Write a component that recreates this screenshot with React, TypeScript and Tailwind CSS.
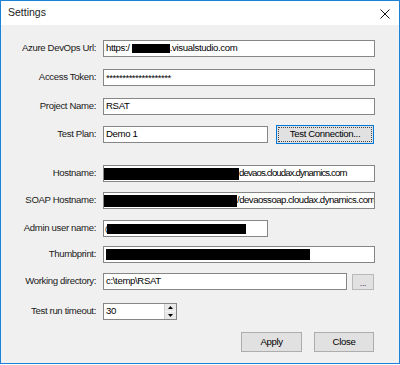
import React from "react";

const Label = ({ children }: { children: React.ReactNode }) => (
  <div className="w-[96px] shrink-0 text-right pr-[1px] whitespace-nowrap text-[#1a1a1a]">{children}</div>
);

const Box = ({
  width,
  className = "",
  children,
}: {
  width: string;
  className?: string;
  children?: React.ReactNode;
}) => (
  <div
    className={`${width} h-[17px] ml-[6px] bg-white border border-[#868686] flex items-center overflow-hidden whitespace-nowrap ${className}`}
  >
    {children}
  </div>
);

const Redact = ({ className }: { className: string }) => (
  <span className={`inline-block shrink-0 bg-black ${className}`} />
);

function Row({ label, mt, children }: { label: string; mt: string; children: React.ReactNode }) {
  return (
    <div className={`flex items-center h-[17px] ${mt}`}>
      <Label>{label}</Label>
      {children}
    </div>
  );
}

export default function App() {
  return (
    <div className="w-[400px] h-[365px] bg-white font-['Liberation_Sans',Arial,sans-serif] text-[9.6px] tracking-[-0.35px] text-black">
      <div className="h-[364px] border border-[#1883d7] bg-[#f0f0f0] flex flex-col">
        {/* title bar */}
        <div className="h-[24px] bg-white flex items-center justify-between pl-[7px] pr-[8px] shrink-0">
          <span className="text-[10.5px] tracking-[0px] text-[#222]">Settings</span>
          <svg width="10" height="10" viewBox="0 0 10 10" className="mr-[1px] mt-[2px]">
            <path d="M0.5 0.5 L9.5 9.5 M9.5 0.5 L0.5 9.5" stroke="#111" strokeWidth="1" />
          </svg>
        </div>

        <div className="flex flex-col">
          <Row label="Azure DevOps Url:" mt="mt-[15px]">
            <Box width="w-[272px]" className="pl-[2px]">
              <span>https:/</span>
              <Redact className="w-[38px] h-[9px] ml-[2px]" />
              <span>.visualstudio.com</span>
            </Box>
          </Row>

          <Row label="Access Token:" mt="mt-[12px]">
            <Box width="w-[272px]" className="pl-[2px] items-start pt-[1px]">
              <span className="tracking-[-0.5px]">********************</span>
            </Box>
          </Row>

          <Row label="Project Name:" mt="mt-[12px]">
            <Box width="w-[272px]" className="pl-[2px]">
              <span>RSAT</span>
            </Box>
          </Row>

          <Row label="Test Plan:" mt="mt-[11px]">
            <Box width="w-[165px]" className="pl-[2px]">
              <span>Demo 1</span>
            </Box>
            <button className="ml-[8px] w-[98px] h-[19px] p-[1px] bg-[#e1e1e1] border border-[#0078d7] flex">
              <span className="flex-1 border border-dotted border-[#444] flex items-center justify-center">
                Test Connection...
              </span>
            </button>
          </Row>

          <Row label="Hostname:" mt="mt-[22px]">
            <Box width="w-[272px]">
              <Redact className="w-[135px] h-[12px]" />
              <span className="tracking-[-0.85px]">devaos.cloudax.dynamics.com</span>
            </Box>
          </Row>

          <Row label="SOAP Hostname:" mt="mt-[10px]">
            <Box width="w-[272px]">
              <Redact className="w-[133px] h-[12px]" />
              <span className="tracking-[-0.5px]">/devaossoap.cloudax.dynamics.com</span>
            </Box>
          </Row>

          <Row label="Admin user name:" mt="mt-[11px]">
            <Box width="w-[165px]" className="pl-[1px]">
              <span className="text-[8px]">(</span>
              <Redact className="w-[139px] h-[10px]" />
            </Box>
          </Row>

          <Row label="Thumbprint:" mt="mt-[9px]">
            <Box width="w-[272px]" className="pl-[2px]">
              <Redact className="w-[204px] h-[11px]" />
            </Box>
          </Row>

          <Row label="Working directory:" mt="mt-[10px]">
            <Box width="w-[244px]" className="pl-[2px]">
              <span>c:\temp\RSAT</span>
            </Box>
            <button className="ml-[5px] w-[22px] h-[16px] bg-[#e1e1e1] border border-[#b8b8b8] flex items-end justify-center pb-[1px] leading-none text-[9px] text-[#553366]">
              ...
            </button>
          </Row>

          <Row label="Test run timeout:" mt="mt-[13px]">
            <div className="ml-[6px] w-[74px] h-[17px] bg-white border border-[#868686] flex">
              <span className="flex-1 pl-[2px] flex items-center">30</span>
              <div className="w-[12px] flex flex-col border-l border-[#d0d0d0]">
                <div className="flex-1 bg-[#e8e8e8] border-b border-[#f4f4f4] flex items-center justify-center">
                  <svg width="5" height="3" viewBox="0 0 5 3">
                    <path d="M2.5 0 L5 3 L0 3 Z" fill="#000" />
                  </svg>
                </div>
                <div className="flex-1 bg-[#e8e8e8] flex items-center justify-center">
                  <svg width="5" height="3" viewBox="0 0 5 3">
                    <path d="M0 0 L5 0 L2.5 3 Z" fill="#000" />
                  </svg>
                </div>
              </div>
            </div>
          </Row>

          <div className="flex justify-end gap-[12px] mt-[12px] pr-[25px]">
            <button className="w-[61px] h-[20px] bg-[#e1e1e1] border border-[#adadad] flex items-center justify-center">
              Apply
            </button>
            <button className="w-[60px] h-[20px] bg-[#e1e1e1] border border-[#adadad] flex items-center justify-center">
              Close
            </button>
          </div>
        </div>
      </div>
    </div>
  );
}
